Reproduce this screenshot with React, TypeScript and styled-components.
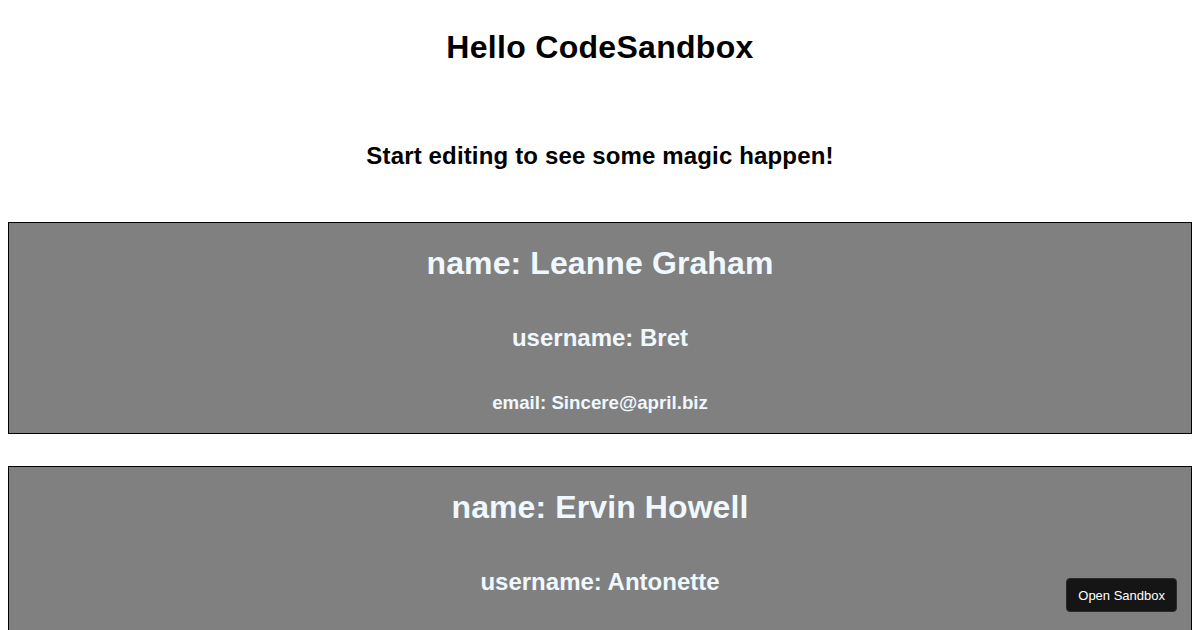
import { createGlobalStyle, styled } from 'styled-components';

const GlobalStyle = createGlobalStyle`
  body {
    margin: 0;
    font-family: "Liberation Sans", Arial, sans-serif;
    background: #fff;
  }
`;

const Page = styled.div`
  display: flex;
  flex-direction: column;
  padding: 8px;
  text-align: center;
`;

const Title = styled.h1`
  font-size: 32px;
  margin: 21.44px 0;
  letter-spacing: 0.3px;
  color: #000;
`;

const Subtitle = styled.h2`
  font-size: 24px;
  margin: 54px 0 19.92px;
  letter-spacing: 0.15px;
  color: #000;
`;

const Card = styled.div`
  display: flex;
  flex-direction: column;
  margin-top: 32px;
  background-color: gray;
  border: 1px solid black;
  color: aliceblue;
`;

const Name = styled.h1`
  font-size: 32px;
  margin: 22.44px 0 21.44px;
  letter-spacing: 0.1px;
`;

const Username = styled.h2`
  font-size: 24px;
  margin: 19.92px 0;
`;

const Email = styled.h3`
  font-size: 18.72px;
  margin: 20.72px 0 18.72px;
`;

const OpenButton = styled.button`
  position: fixed;
  right: 23px;
  bottom: 18px;
  height: 34px;
  padding: 0 11px;
  background: #151515;
  color: #fff;
  border: 1px solid #2a2a2a;
  border-radius: 4px;
  font-family: "Liberation Sans", Arial, sans-serif;
  font-size: 13px;
  cursor: pointer;
`;

interface User {
  id: number;
  name: string;
  username: string;
  email: string;
}

const users: User[] = [
  { id: 1, name: 'Leanne Graham', username: 'Bret', email: 'Sincere@april.biz' },
  { id: 2, name: 'Ervin Howell', username: 'Antonette', email: 'Shanna@melissa.tv' },
];

export default function App() {
  return (
    <>
      <GlobalStyle />
      <Page>
        <Title>Hello CodeSandbox</Title>
        <Subtitle>Start editing to see some magic happen!</Subtitle>
        {users.map((user) => (
          <Card key={user.id}>
            <Name>name: {user.name}</Name>
            <Username>username: {user.username}</Username>
            <Email>email: {user.email}</Email>
          </Card>
        ))}
      </Page>
      <OpenButton>Open Sandbox</OpenButton>
    </>
  );
}
